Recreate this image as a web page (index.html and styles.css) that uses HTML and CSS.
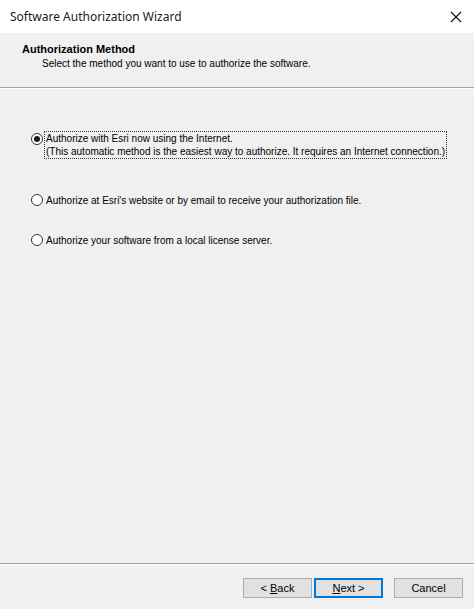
FILE: index.html
```html
<!DOCTYPE html>
<html>
<head>
<meta charset="utf-8">
<link rel="stylesheet" href="styles.css">
</head>
<body>
<div class="window">
  <div class="titlebar">
    <span class="title">Software Authorization Wizard</span>
    <svg class="close" width="12" height="12" viewBox="0 0 12 12"><path d="M1 1 L11 11 M11 1 L1 11" stroke="#111" stroke-width="1.1" fill="none"/></svg>
  </div>
  <div class="header">
    <div class="h-title">Authorization Method</div>
    <div class="h-sub">Select the method you want to use to authorize the software.</div>
  </div>
  <div class="sep"></div>
  <div class="content">
    <div class="option opt1">
      <span class="radio checked"></span>
      <span class="label focus">Authorize with Esri now using the Internet.<br>(This automatic method is the easiest way to authorize. It requires an Internet connection.)</span>
    </div>
    <div class="option opt2">
      <span class="radio"></span>
      <span class="label">Authorize at Esri's website or by email to receive your authorization file.</span>
    </div>
    <div class="option opt3">
      <span class="radio"></span>
      <span class="label">Authorize your software from a local license server.</span>
    </div>
  </div>
  <div class="sep"></div>
  <div class="footer">
    <button class="btn">&lt; <u>B</u>ack</button>
    <button class="btn default"><u>N</u>ext &gt;</button>
    <button class="btn cancel">Cancel</button>
  </div>
</div>
</body>
</html>
```
FILE: styles.css
```css
html, body {
  margin: 0;
  padding: 0;
  background: #f0f0f0;
}
.window {
  width: 474px;
  height: 609px;
  display: flex;
  flex-direction: column;
  background: #f0f0f0;
  font-family: "Liberation Sans", Arial, sans-serif;
  font-size: 10px;
  color: #000;
}
.titlebar {
  height: 33px;
  flex: 0 0 33px;
  background: #fff;
  display: flex;
  align-items: center;
  justify-content: space-between;
  padding: 0 12px 0 10px;
  box-sizing: border-box;
}
.title {
  font-family: "Noto Sans", "Open Sans", sans-serif;
  font-size: 12px;
  color: #1a1a1a;
}
.close {
  display: block;
}
.header {
  height: 54px;
  flex: 0 0 54px;
  box-sizing: border-box;
  padding: 10px 0 0 22px;
}
.h-title {
  font-weight: bold;
  font-size: 11px;
  line-height: 13px;
}
.h-sub {
  padding-left: 20px;
  line-height: 13px;
  margin-top: 1px;
}
.sep {
  height: 1px;
  flex: 0 0 1px;
  background: #a0a0a0;
  border-bottom: 1px solid #fff;
}
.content {
  flex: 1;
  display: flex;
  flex-direction: column;
  padding-top: 43px;
  padding-left: 31px;
}
.option {
  display: flex;
  align-items: flex-start;
}
.opt2 { margin-top: 36px; }
.opt3 { margin-top: 27px; }
.radio {
  width: 12px;
  height: 12px;
  border: 1px solid #333;
  border-radius: 50%;
  background: #fff;
  box-sizing: border-box;
  margin-top: 0;
  margin-right: 2px;
  position: relative;
  flex: 0 0 auto;
}
.checked::after {
  content: "";
  position: absolute;
  left: 2px;
  top: 2px;
  width: 6px;
  height: 6px;
  border-radius: 50%;
  background: #1a1a1a;
}
.label {
  line-height: 13px;
  padding: 0 1px;
}
.focus {
  outline: 1px dotted #333;
  outline-offset: 0;
  padding: 0 1px 0 1px;
}
.opt1 .radio { margin-top: 1px; }
.footer {
  flex: 0 0 44px;
  display: flex;
  justify-content: flex-end;
  align-items: flex-start;
  padding: 13px 11px 0 0;
  box-sizing: border-box;
}
.btn {
  width: 69px;
  height: 20px;
  margin: 0;
  padding: 0;
  border: 1px solid #adadad;
  background: #e1e1e1;
  font-family: "Liberation Sans", Arial, sans-serif;
  font-size: 11px;
  color: #000;
  box-sizing: border-box;
}
.default {
  border: 2px solid #0078d7;
  margin-left: 2px;
}
.cancel {
  margin-left: 11px;
}
```
